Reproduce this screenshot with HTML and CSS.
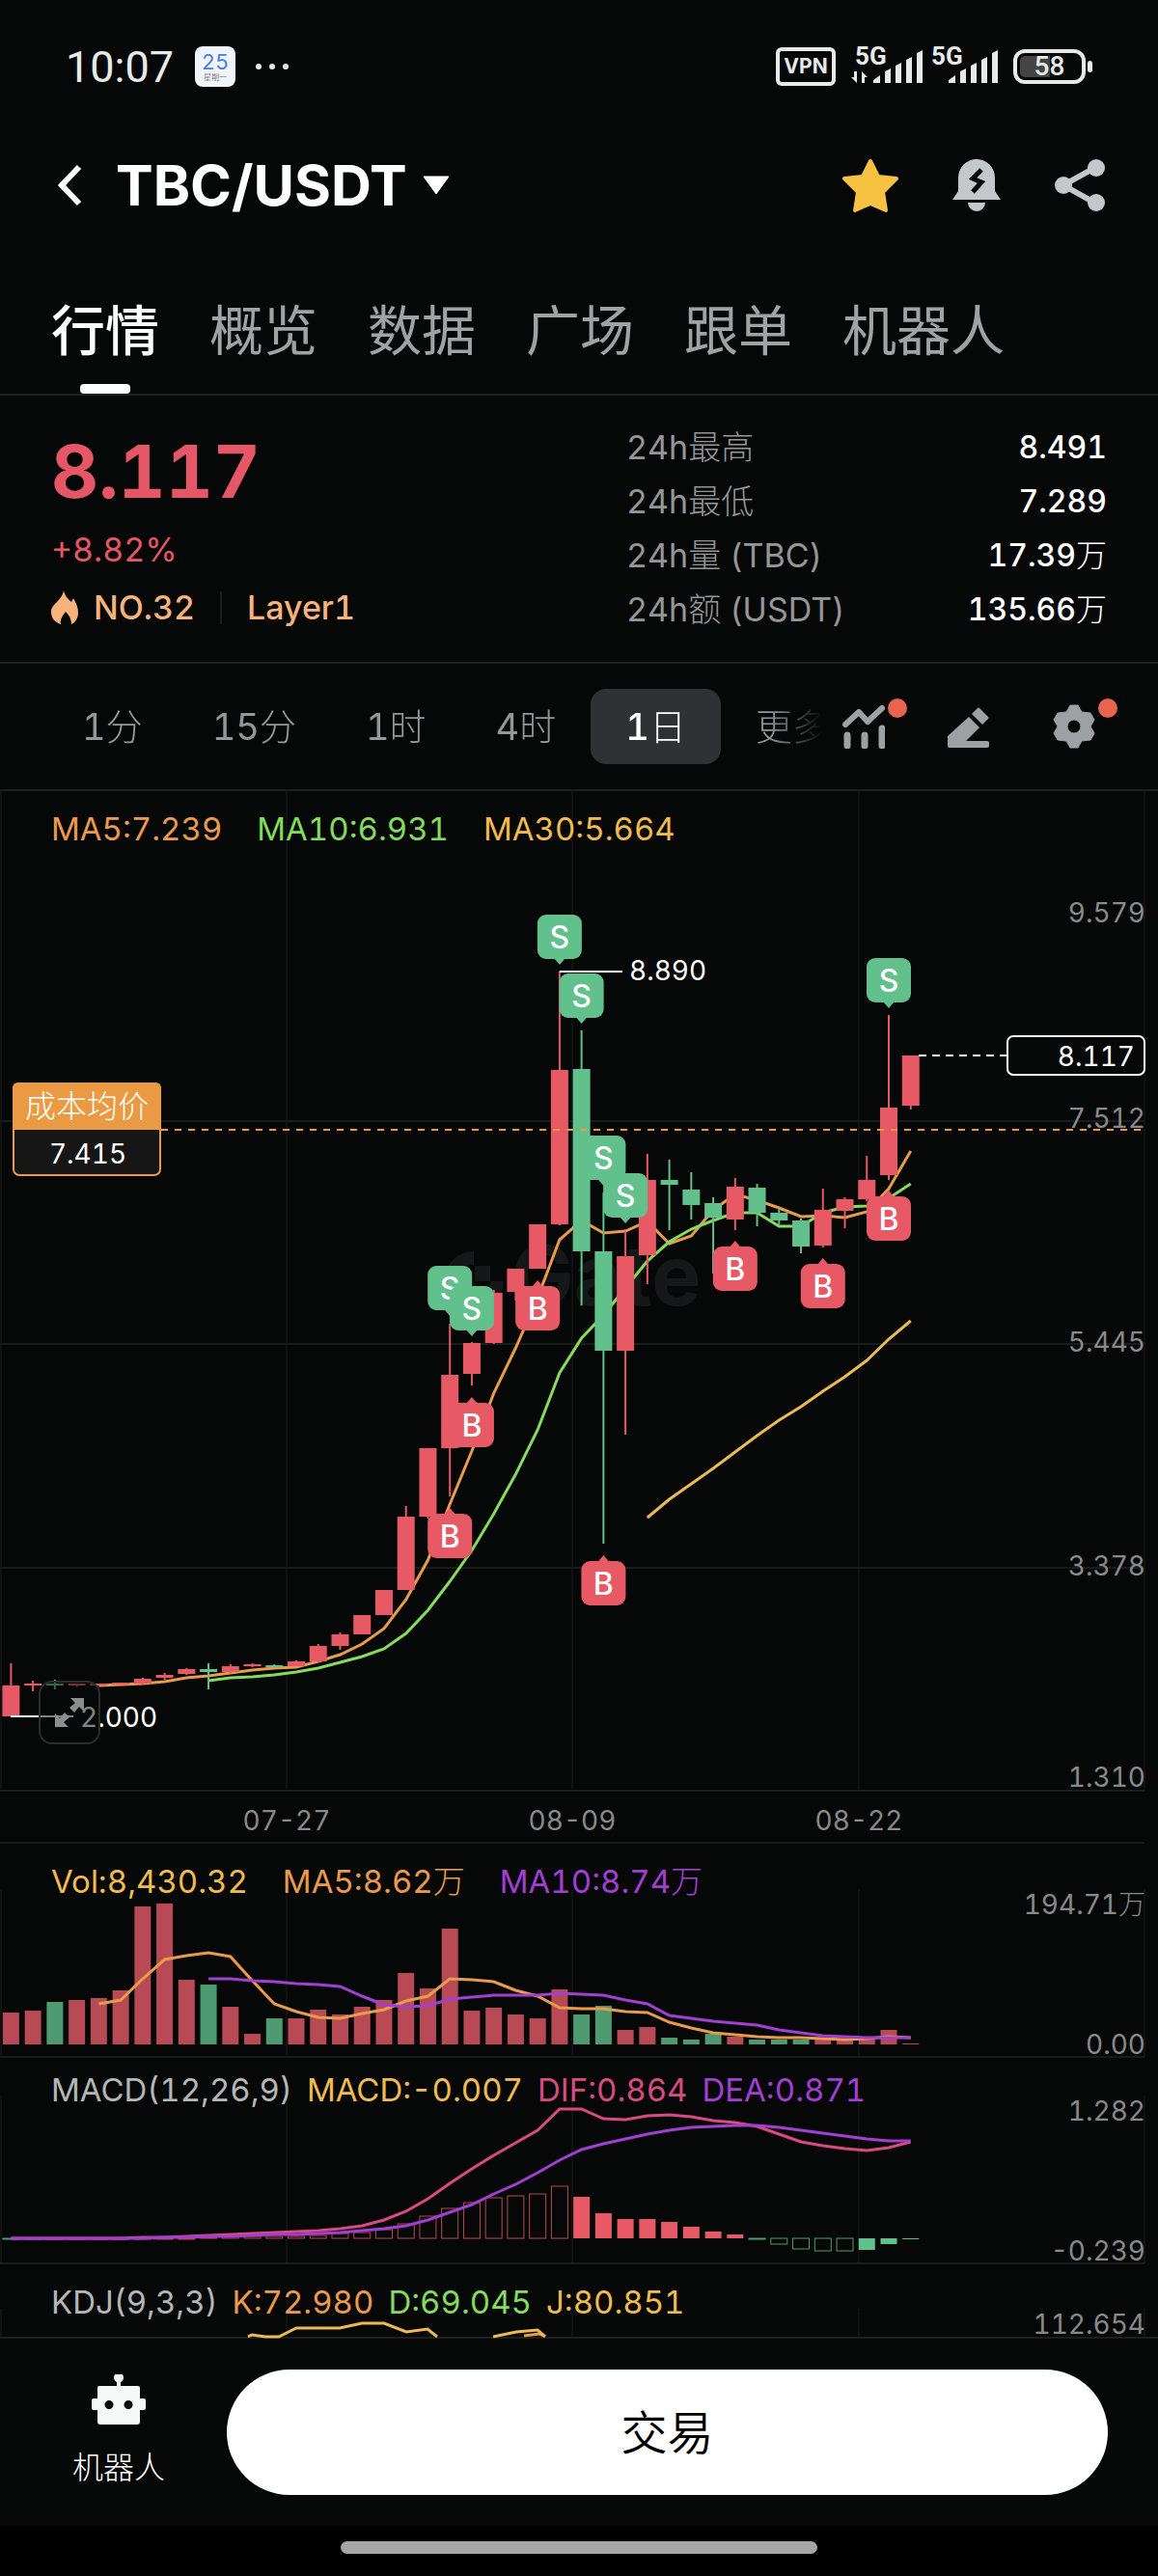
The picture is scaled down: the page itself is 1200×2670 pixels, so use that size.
FILE: index.html
```html
<!DOCTYPE html>
<html lang="zh-CN">
<head>
  <meta charset="UTF-8" />
  <meta name="viewport" content="width=device-width, initial-scale=1" />
  <title>TBC/USDT</title>
  <link rel="stylesheet" href="styles.css">
</head>
<body>

  <!-- Status bar -->
  <div class="status">
    <span class="clock">10:07</span>
    <span class="calendar"><b>25</b><small>星期一</small></span>
    <svg class="dots" width="36" height="8" viewBox="0 0 36 8"><circle cx="4" cy="4" r="3"/><circle cx="18" cy="4" r="3"/><circle cx="32" cy="4" r="3"/></svg>
    <span class="vpn">VPN</span>
    <svg class="signal" width="150" height="44" viewBox="0 0 150 44">
      <text x="2" y="20">5G</text>
      <path d="M4 27v12l-6-6h3v-6zM9 39V27l6 6h-3v6z"/>
      <path d="M21 39v-3l7-5v8zM33 39V27l6-3v15zM44 39V21l6-3v21zM55 39V15l6-3v27zM66 39V8l6-3v34z"/>
      <text x="81" y="20">5G</text>
      <path d="M99 39v-3l7-5v8zM111 39V27l6-3v15zM122 39V21l6-3v21zM133 39V15l6-3v27zM144 39V8l6-3v34z"/>
    </svg>
    <span class="battery">58</span>
  </div>

  <!-- Header -->
  <header class="header">
    <button class="icon-btn" aria-label="返回">
      <svg width="28" height="44" viewBox="0 0 28 44"><path d="M24 3L6 22l18 19" fill="none" stroke="#fff" stroke-width="6"/></svg>
    </button>
    <button class="pair">TBC/USDT
      <svg width="28" height="20" viewBox="0 0 28 20"><path d="M1 1h26L14 19z" fill="#fff" stroke="#fff" stroke-linejoin="round"/></svg>
    </button>
    <div class="actions">
      <button class="icon-btn" aria-label="收藏">
        <svg width="60" height="58" viewBox="0 0 60 58"><path d="M30 4l8 16 19 2-14 14 3 19-16-7-16 7 3-19L3 22l19-2z" fill="#f7c142" stroke="#f7c142" stroke-width="4" stroke-linejoin="round"/></svg>
      </button>
      <button class="icon-btn" aria-label="提醒">
        <svg width="50" height="56" viewBox="0 0 50 56">
          <path d="M6 20a19 19 0 0 1 38 0v14l6 9H0l6-9z" fill="#c4c8ca"/>
          <path d="M16 46h18a9 9 0 0 1-18 0z" fill="#c4c8ca"/>
          <path d="M30 12l-9 9 9 4-9 10" fill="none" stroke="#060807" stroke-width="5"/>
        </svg>
      </button>
      <button class="icon-btn" aria-label="分享">
        <svg width="54" height="56" viewBox="0 0 54 56">
          <path d="M44 9L10 28l34 19" fill="none" stroke="#c4c8ca" stroke-width="6"/>
          <circle cx="44" cy="10" r="9" fill="#c4c8ca"/><circle cx="10" cy="28" r="9" fill="#c4c8ca"/><circle cx="44" cy="46" r="9" fill="#c4c8ca"/>
        </svg>
      </button>
    </div>
  </header>

  <nav class="tabs">
    <a href="#market" class="active">行情</a>
    <a href="#overview">概览</a>
    <a href="#data">数据</a>
    <a href="#square">广场</a>
    <a href="#copy">跟单</a>
    <a href="#bot">机器人</a>
  </nav>

  <!-- Price and 24h numbers -->
  <section class="quote">
    <div class="quote-left">
      <div class="price">8.117</div>
      <div class="change">+8.82%</div>
      <div class="tags">
        <svg width="28" height="36" viewBox="0 0 28 36"><path d="M13 0c1 6 5 9 8 12l2-4c3 5 5 10 5 15 0 6-3 10-7 12 0-5-2-9-6-13-3 4-6 8-5 13C4 33 0 29 0 22 0 14 11 11 13 0z" fill="#f6b37c"/></svg>
        <a href="#rank">NO.32</a>
        <i></i>
        <a href="#layer1">Layer1</a>
      </div>
    </div>
    <dl class="stats">
      <div><dt>24h最高</dt><dd>8.491</dd></div>
      <div><dt>24h最低</dt><dd>7.289</dd></div>
      <div><dt>24h量 (TBC)</dt><dd>17.39万</dd></div>
      <div><dt>24h额 (USDT)</dt><dd>135.66万</dd></div>
    </dl>
  </section>

  <!-- Timeframes -->
  <div class="toolbar">
    <div class="frames">
      <button>1分</button>
      <button>15分</button>
      <button>1时</button>
      <button>4时</button>
      <button class="active">1日</button>
      <button>更多</button>
    </div>
    <div class="tools">
      <button class="icon-btn dot" aria-label="指标">
        <svg width="44" height="46" viewBox="0 0 44 46">
          <path d="M3 21L17 8l9 10L41 4" fill="none" stroke="#9ea1a3" stroke-width="6" stroke-linecap="round" stroke-linejoin="round"/>
          <path d="M5 32v11M23 32v11M41 25v18" fill="none" stroke="#9ea1a3" stroke-width="7" stroke-linecap="round"/>
        </svg>
      </button>
      <button class="icon-btn" aria-label="画线">
        <svg width="44" height="46" viewBox="0 0 44 46">
          <path d="M22 13l11 11-14 14h22q2 0 2 2v3q0 2-2 2H2q-2 0-2-2V33z" fill="#9ea1a3"/>
          <path d="M25 10l6-6q1-1 2 0l9 9q1 1 0 2l-6 6z" fill="#9ea1a3"/>
        </svg>
      </button>
      <button class="icon-btn dot" aria-label="设置">
        <svg width="44" height="46" viewBox="0 0 44 46">
          <path fill-rule="evenodd" d="M18 1h8l4 7 9 1 4 7-4 7 4 7-4 7-9 1-4 7h-8l-4-7-9-1-4-7 4-7-4-7 4-7 9-1zM22 16a7 7 0 1 0 0 14 7 7 0 0 0 0-14z" fill="#9ea1a3" stroke="#9ea1a3" stroke-linejoin="round"/>
        </svg>
      </button>
    </div>
  </div>

  <!-- Charts, drawn by chart.js -->
  <section class="panel">
    <svg id="priceChart" viewBox="0 820 1200 1091"></svg>
    <div class="legend wide">
      <span class="orange">MA5:7.239</span>
      <span class="green">MA10:6.931</span>
      <span class="yellow">MA30:5.664</span>
    </div>
    <button class="expand" aria-label="全屏">
      <svg width="30" height="30" viewBox="0 0 30 30"><path d="M16 0h14v14l-5-5-5 6-5-5 6-5zM14 30H0V16l5 5 5-6 5 5-6 5z" fill="#8c8e8f"/></svg>
    </button>
  </section>

  <section class="panel">
    <svg id="volChart" viewBox="0 1911 1200 222"></svg>
    <div class="legend wide">
      <span class="yellow">Vol:8,430.32</span>
      <span class="orange">MA5:8.62万</span>
      <span class="purple">MA10:8.74万</span>
    </div>
  </section>

  <section class="panel">
    <svg id="macdChart" viewBox="0 2133 1200 214"></svg>
    <div class="legend">
      <span>MACD(12,26,9)</span>
      <span class="yellow">MACD:-0.007</span>
      <span class="pink">DIF:0.864</span>
      <span class="purple">DEA:0.871</span>
    </div>
  </section>

  <section class="panel">
    <svg id="kdjChart" viewBox="0 2347 1200 75"></svg>
    <div class="legend kdj">
      <span>KDJ(9,3,3)</span>
      <span class="orange">K:72.980</span>
      <span class="green">D:69.045</span>
      <span class="yellow">J:80.851</span>
    </div>
  </section>

  <!-- Bottom bar -->
  <footer class="bottom">
    <button class="robot">
      <svg width="56" height="52" viewBox="0 0 56 52">
        <path fill-rule="evenodd" d="M26 12V8a5 5 0 1 1 4 0v4h18q2 0 2 2v11h4q2 0 2 2v8q0 2-2 2h-4v12q0 3-3 3H9q-3 0-3-3V37H2q-2 0-2-2v-8q0-2 2-2h4V14q0-2 2-2zM18 27a4 4 0 1 0 0 9 4 4 0 0 0 0-9zm20 0a4 4 0 1 0 0 9 4 4 0 0 0 0-9z" fill="#f7f8f8"/>
      </svg>
      机器人
    </button>
    <button class="trade">交易</button>
  </footer>
  <div class="home"><i></i></div>

  <script src="chart.js"></script>
</body>
</html>
```

FILE: styles.css
```css
* {
  box-sizing: border-box;
}

body {
  margin: 0;
  background: #060807;
  color: #fff;
  font-family: Inter, "Noto Sans CJK SC Light", "Noto Sans CJK SC", sans-serif;
  font-size: 32px;
  font-variant-numeric: tabular-nums;
}

button {
  margin: 0;
  padding: 0;
  border: 0;
  background: none;
  color: inherit;
  font: inherit;
  font-variant-numeric: inherit;
  cursor: pointer;
}

a {
  color: inherit;
  text-decoration: none;
}

svg {
  display: block;
}

.icon-btn {
  position: relative;
}

/* status bar */
.status {
  display: flex;
  align-items: center;
  height: 138px;
  padding: 0 75px 0 68px;
  color: #e8eae9;
}

.clock {
  font-family: Roboto, sans-serif;
  font-size: 45px;
}

.calendar {
  display: flex;
  flex-direction: column;
  align-items: center;
  justify-content: center;
  width: 42px;
  height: 42px;
  margin: 0 20px 0 22px;
  border-radius: 8px;
  background: #f1f5f9;
  color: #4a7de0;
}

.calendar b {
  font-size: 22px;
  font-weight: 400;
  line-height: 22px;
}

.calendar small {
  color: #333;
  font-size: 8px;
  line-height: 10px;
}

.dots,
.signal {
  fill: #e8eae9;
}

.vpn {
  margin-left: auto;
  width: 62px;
  border: 4px solid #e8eae9;
  border-radius: 6px;
  font-size: 21px;
  font-weight: 700;
  line-height: 32px;
  text-align: center;
}

.signal {
  margin: 0 16px 0 18px;
  overflow: visible;
}

.signal text {
  font-family: Roboto, sans-serif;
  font-size: 26px;
  font-weight: 700;
}

.battery {
  position: relative;
  width: 75px;
  border: 4px solid #e8eae9;
  border-radius: 12px;
  background: linear-gradient(90deg, #444 50%, transparent 50%) content-box;
  padding: 3px;
  font-family: Roboto, sans-serif;
  font-size: 28px;
  font-weight: 500;
  line-height: 22px;
  text-align: center;
}

.battery::after {
  content: "";
  position: absolute;
  right: -11px;
  top: 8px;
  width: 5px;
  height: 12px;
  border-radius: 3px;
  background: #e8eae9;
}

/* header */
.header {
  display: flex;
  align-items: center;
  gap: 34px;
  height: 108px;
  padding: 0 54px 0 58px;
}

.pair {
  display: flex;
  align-items: center;
  gap: 16px;
  font-size: 58px;
  font-weight: 700;
}

.actions {
  display: flex;
  align-items: center;
  gap: 55px;
  margin-left: auto;
}

.tabs {
  display: flex;
  gap: 52px;
  height: 164px;
  padding: 0 53px;
  border-bottom: 2px solid #1d1f1f;
  color: #a0a2a3;
  font-family: "Noto Sans CJK SC", sans-serif;
  font-size: 56px;
  line-height: 186px;
}

.tabs a {
  position: relative;
  height: 162px;
}

.tabs .active {
  color: #fff;
  font-weight: 500;
}

.tabs .active::after {
  content: "";
  position: absolute;
  left: 50%;
  bottom: 0;
  width: 52px;
  height: 10px;
  margin-left: -26px;
  border-radius: 4px;
  background: #fff;
}

/* quote */
.quote {
  display: flex;
  justify-content: space-between;
  padding: 26px 53px;
  border-bottom: 2px solid #1d1f1f;
}

.price {
  color: #e55767;
  font-size: 76px;
  font-weight: 700;
  line-height: 104px;
}

.change {
  color: #e55767;
  font-size: 34px;
  line-height: 60px;
}

.tags {
  display: flex;
  align-items: center;
  gap: 16px;
  color: #f6b37c;
  font-size: 34px;
  font-weight: 500;
  line-height: 60px;
}

.tags i {
  width: 2px;
  height: 34px;
  margin: 0 10px;
  background: #1d1f1f;
}

.stats {
  width: 498px;
  margin: 0;
  line-height: 56px;
}

.stats div {
  display: flex;
  justify-content: space-between;
}

.stats dt {
  color: #949698;
  font-size: 34px;
}

.stats dd {
  margin: 0;
  font-weight: 500;
}

/* timeframe toolbar */
.toolbar {
  display: flex;
  align-items: center;
  justify-content: space-between;
  height: 132px;
  padding: 0 65px 0 49px;
  border-bottom: 2px solid #1d1f1f;
}

.frames {
  display: flex;
  flex: 1;
  min-width: 0;
  max-width: 804px;
  overflow: hidden;
  color: #949698;
  font-size: 38px;
  -webkit-mask: linear-gradient(90deg, #000 93%, transparent);
  mask: linear-gradient(90deg, #000 93%, transparent);
}

.frames button {
  flex: none;
  padding: 0 36px;
  line-height: 78px;
}

.frames .active {
  border-radius: 16px;
  background: #303134;
  color: #fff;
  font-weight: 500;
}

.tools {
  display: flex;
  gap: 65px;
}

.dot::after {
  content: "";
  position: absolute;
  top: -6px;
  right: -23px;
  width: 20px;
  height: 20px;
  border-radius: 50%;
  background: #ea6350;
}

/* chart panels, the legend lies over the svg */
.panel {
  position: relative;
  display: grid;
}

.panel > svg,
.legend {
  grid-area: 1 / 1;
}

.panel > svg {
  width: 100%;
  overflow: visible;
}

.legend {
  display: flex;
  align-items: center;
  align-self: start;
  gap: 15px;
  padding: 12px 53px;
  color: #b4b6b7;
  font-size: 33px;
  line-height: 42px;
}

.legend.wide {
  gap: 36px;
  padding-top: 18px;
}

.legend.kdj {
  padding: 18px 53px 0;
}

.orange { color: #ea9a4c; }
.green { color: #82dd5c; }
.yellow { color: #f0bb4f; }
.purple { color: #a23fd2; }
.pink { color: #d94a83; }

.expand {
  position: absolute;
  left: 40px;
  bottom: 103px;
  display: grid;
  place-items: center;
  width: 64px;
  height: 66px;
  border: 2px solid #2b2d2d;
  border-radius: 14px;
  background: rgba(6, 8, 7, 0.5);
}

.panel svg text {
  font-size: 28px;
  fill: #87898a;
}

.panel svg .white {
  fill: #fff;
}

.panel svg .cost {
  font-size: 32px;
  fill: #fff;
}

.panel svg .mark {
  font-size: 32px;
  font-weight: 500;
  fill: #fff;
}

.panel svg .watermark {
  font-size: 86px;
  font-weight: 700;
  fill: #151718;
}

/* bottom */
.bottom {
  display: flex;
  align-items: center;
  gap: 64px;
  height: 196px;
  padding: 0 52px 0 75px;
  border-top: 2px solid #1d1f1f;
}

.robot {
  display: flex;
  flex-direction: column;
  align-items: center;
  gap: 22px;
  line-height: 46px;
}

.trade {
  flex: 1;
  height: 130px;
  padding-bottom: 6px;
  border-radius: 65px;
  background: #fff;
  color: #000;
  font-family: "Noto Sans CJK SC DemiLight", "Noto Sans CJK SC", sans-serif;
  font-size: 48px;
}

.home {
  display: flex;
  justify-content: center;
  height: 52px;
  padding-top: 16px;
  background: #000;
}

.home i {
  width: 494px;
  height: 13px;
  border-radius: 7px;
  background: #a6a6a6;
}
```

FILE: chart.js
```js
const RED = "#e65965";
const GREEN = "#62c08c";
const GRID = "#1a1c1c";
const STEP = 22.74;
const xs = [1, 297, 593, 890, 1186];

const cx = (i) => 11.4 + STEP * i;

// direction, high, body top, body bottom, low
const candles = [
  ["r",1724,1747,1779,1779],["r",1742,1745,1747,1753],["g",1741,1745,1747,1751],["r",1745,1745,1747,1748],
  ["r",1745,1745,1747,1747],["r",1744,1744,1746,1746],["r",1739,1740,1745,1746],["r",1734,1736,1739,1741],
  ["r",1729,1730,1735,1736],["g",1724,1730,1733,1751],["r",1725,1727,1733,1735],["r",1724,1725,1727,1728],
  ["g",1725,1726,1728,1728],["r",1721,1722,1727,1727],["r",1704,1706,1722,1723],["r",1692,1694,1706,1710],
  ["r",1674,1674,1694,1694],["r",1648,1648,1674,1674],["r",1561,1572,1648,1648],["r",1501,1501,1572,1574],
  ["r",1372,1425,1501,1551],["r",1391,1392,1424,1436],["r",1337,1340,1392,1393],["r",1315,1315,1339,1348],
  ["r",1269,1269,1315,1315],["r",1007,1109,1269,1270],["g",1068,1108,1297,1353],["g",1236,1297,1400,1600],
  ["r",1276,1302,1400,1487],["r",1196,1223,1301,1331],["g",1202,1223,1228,1275],["g",1215,1233,1249,1264],
  ["g",1241,1247,1262,1320],["r",1221,1230,1264,1275],["g",1227,1231,1257,1271],["g",1252,1257,1265,1269],
  ["g",1263,1265,1292,1299],["r",1232,1254,1291,1293],["r",1241,1243,1255,1273],["r",1198,1223,1243,1245],
  ["r",1052,1148,1218,1223],["r",1094,1094,1146,1150]
];

const ma5 = [1747,1746,1745,1743,1739,1737,1734,1731,1729,1728,1722,1715,1704,1688,1658,1617,1559,1504,1444,1397,1345,1285,1265,1278,1276,1266,1289,1281,1254,1238,1244,1252,1261,1260,1262,1256,1232,1193];
const ma10 = [1742,1739,1738,1736,1733,1729,1723,1717,1709,1693,1669,1639,1607,1569,1528,1482,1423,1387,1363,1335,1307,1287,1274,1265,1257,1257,1271,1271,1257,1251,1250,1242,1227];
const ma30 = [1573,1554,1538,1522,1505,1488,1472,1458,1442,1427,1410,1388,1369];

const marks = [
  ["S",20,1312],["S",21,1333],["S",25,948],["S",26,1009],["S",27,1177],["S",28,1216],["S",40,993],
  ["B",20,1569],["B",21,1454],["B",24,1333],["B",27,1618],["B",33,1292],["B",37,1310],["B",40,1240]
];

const volume = [2086,2084,2075,2073,2071,2063,1976,1973,2052,2057,2080,2108,2092,2092,2083,2088,2080,2073,2045,2061,1999,2084,2081,2088,2092,2062,2088,2079,2104,2101,2112,2114,2108,2111,2114,2114,2114,2114,2115,2114,2104,2118];
const vol5 = [2077,2073,2051,2031,2027,2024,2028,2053,2077,2085,2091,2092,2087,2083,2074,2069,2051,2052,2054,2063,2069,2081,2082,2082,2085,2086,2096,2102,2107,2109,2111,2112,2112,2113,2114,2113,2111,2112];
const vol10 = [2051,2051,2053,2054,2056,2057,2059,2069,2078,2080,2079,2072,2070,2068,2068,2068,2066,2067,2068,2073,2077,2089,2092,2095,2097,2099,2104,2107,2110,2111,2112,2112,2112];

// hollow bars grow, solid ones shrink
const macd = [2320,2320,2320,2320,2320,2320,2320,2320,2320,2319,2318,2318,2318,2318,2317,2315,2314,2311,2305,2297,2289,2283,2278,2276,2274,2266,2277,2294,2300,2300,2303,2308,2313,2316,2321,2326,2331,2333,2333,2332,2326,2321];
const dif = [2320,2320,2320,2320,2320,2320,2319,2319,2318,2317,2316,2315,2314,2313,2312,2310,2307,2301,2292,2279,2263,2248,2234,2221,2208,2186,2186,2196,2197,2193,2192,2194,2198,2200,2204,2212,2220,2224,2227,2229,2226,2220];
const dea = [2320,2320,2320,2320,2320,2320,2320,2319,2319,2318,2318,2317,2316,2316,2315,2314,2312,2310,2307,2301,2293,2285,2274,2264,2252,2239,2228,2222,2217,2212,2208,2205,2204,2203,2203,2205,2208,2211,2214,2217,2219,2219];

const rect = (x, y, w, h, fill, extra = "") => `<rect x="${x}" y="${y}" width="${w}" height="${h}" fill="${fill}" ${extra}/>`;
const line = (x1, y1, x2, y2, color, width = 2, extra = "") => `<path d="M${x1} ${y1}L${x2} ${y2}" stroke="${color}" stroke-width="${width}" ${extra}/>`;
const text = (x, y, s, anchor = "end", cls = "") => `<text x="${x}" y="${y}" text-anchor="${anchor}" class="${cls}">${s}</text>`;
const poly = (pts, color) => `<polyline points="${pts.join(" ")}" fill="none" stroke="${color}" stroke-width="3"/>`;
const series = (ys, start, color) => poly(ys.map((y, i) => cx(i + start) + "," + y), color);
const columns = (top, bottom) => xs.map((x) => line(x, top, x, bottom, GRID, 1)).join("");

function drawPrice() {
  let s = columns(820, 1856);
  [1162, 1393, 1625, 1856, 1910].forEach((y) => { s += line(0, y, 1186, y, GRID); });

  // watermark
  s += `<path d="M491 1297a31 31 0 1 0 31 31h-14a17 17 0 1 1-17-17z" fill="#151718"/>` + rect(492, 1312, 16, 16, "#151718");
  s += text(530, 1353, "Gate", "start", "watermark");

  s += series(ma5, 4, "#e79b4b") + series(ma10, 9, "#86db5d") + series(ma30, 29, "#ecb955");

  candles.forEach(([dir, high, top, bottom, low], i) => {
    const color = dir === "r" ? RED : GREEN;
    s += line(cx(i), high, cx(i), low, color);
    s += rect(cx(i) - 9, top, 18, bottom - top, color);
  });

  // highest, lowest and last price
  s += line(580, 1007, 645, 1007, "#fff") + text(652, 1016, "8.890", "start", "white");
  s += line(11, 1779, 76, 1779, "#fff") + text(83, 1790, "2.000", "start", "white");
  s += line(952, 1094, 1043, 1094, "#fff", 2, 'stroke-dasharray="8 6"');

  [["9.579", 956], ["7.512", 1169], ["5.445", 1401], ["3.378", 1633], ["1.310", 1852]].forEach(([t, y]) => { s += text(1187, y, t); });
  [["07-27", 297], ["08-09", 593], ["08-22", 890]].forEach(([t, x]) => { s += text(x, 1897, t, "middle"); });

  s += rect(1044, 1074, 142, 40, "#060807", 'rx="6" stroke="#fff" stroke-width="2"') + text(1176, 1105, "8.117", "end", "white");

  // average cost
  s += line(167, 1171, 1186, 1171, "#e99a42", 2, 'stroke-dasharray="7 7"');
  s += rect(14, 1123, 152, 95, "#161616", 'rx="6" stroke="#e99a42" stroke-width="2"');
  s += `<path d="M13 1171v-43q0-6 6-6h142q6 0 6 6v43z" fill="#e99a42"/>`;
  s += text(90, 1158, "成本均价", "middle", "cost") + text(91, 1206, "7.415", "middle", "white");

  marks.forEach(([type, i, y]) => {
    const color = type === "S" ? GREEN : RED;
    const x = cx(i);
    s += rect(x - 23, y, 46, 46, color, 'rx="9"');
    s += type === "S"
      ? `<path d="M${x - 6} ${y + 45}h12l-6 7z" fill="${color}"/>`
      : `<path d="M${x - 6} ${y + 1}h12l-6-7z" fill="${color}"/>`;
    s += text(x, y + 35, type, "middle", "mark");
  });
  document.getElementById("priceChart").innerHTML = s;
}

function drawVolume() {
  let s = columns(1958, 2132) + line(0, 2132, 1186, 2132, GRID);
  volume.forEach((y, i) => {
    s += rect(cx(i) - 8.5, y, 17, 2119 - y, candles[i][0] === "r" ? "#b84a55" : "#4e9b72");
  });
  s += series(vol5, 4, "#e79b4b") + series(vol10, 9, "#a23fd2");
  s += text(1187, 1984, "194.71万") + text(1187, 2129, "0.00");
  document.getElementById("volChart").innerHTML = s;
}

function drawMacd() {
  let s = columns(2172, 2346) + line(0, 2346, 1186, 2346, GRID);
  macd.forEach((y, i) => {
    const top = Math.min(y, 2320);
    const h = Math.max(Math.abs(y - 2320), 1);
    const color = y > 2320 || i < 2 ? GREEN : RED;
    const hollow = i < 26 || (i > 33 && i < 39);
    s += hollow
      ? rect(cx(i) - 8.5, top, 17, h, "none", `stroke="${color}" stroke-opacity="0.8"`)
      : rect(cx(i) - 8.5, top, 17, h, color);
  });
  s += series(dif, 0, "#d94a83") + series(dea, 0, "#a23fd2");
  s += text(1187, 2198, "1.282") + text(1187, 2343, "-0.239");
  document.getElementById("macdChart").innerHTML = s;
}

function drawKdj() {
  let s = columns(2393, 2422);
  s += poly(["543,2421", "559,2419", "564,2421"], "#e79b4b");
  s += poly(["257,2422", "261,2420", "275,2422", "289,2422", "307,2413", "352,2413", "375,2408", "398,2408", "421,2417", "443,2414", "453,2422"], "#ecb955");
  s += poly(["511,2422", "535,2417", "557,2415", "565,2422"], "#ecb955");
  s += text(1187, 2419, "112.654");
  document.getElementById("kdjChart").innerHTML = s;
}

drawPrice();
drawVolume();
drawMacd();
drawKdj();
```
